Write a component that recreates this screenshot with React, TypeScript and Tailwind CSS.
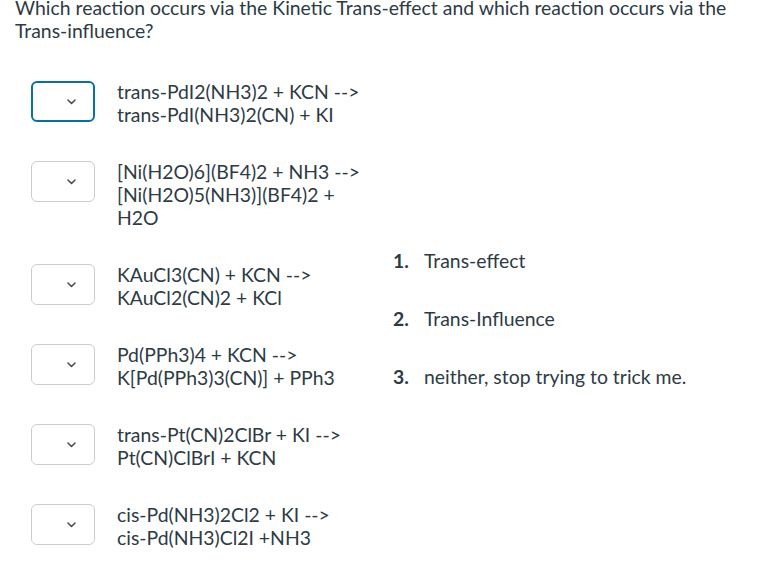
const REACTIONS: string[][] = [
  ['trans-PdI2(NH3)2 + KCN -->', 'trans-PdI(NH3)2(CN) + KI'],
  ['[Ni(H2O)6](BF4)2 + NH3 -->', '[Ni(H2O)5(NH3)](BF4)2 +', 'H2O'],
  ['KAuCl3(CN) + KCN -->', 'KAuCl2(CN)2 + KCl'],
  ['Pd(PPh3)4 + KCN -->', 'K[Pd(PPh3)3(CN)] + PPh3'],
  ['trans-Pt(CN)2ClBr + KI -->', 'Pt(CN)ClBrI + KCN'],
  ['cis-Pd(NH3)2Cl2 + KI -->', 'cis-Pd(NH3)Cl2I +NH3'],
];

const ANSWERS = ['Trans-effect', 'Trans-Influence', 'neither, stop trying to trick me.'];

function SelectBox({ focused }: { focused?: boolean }) {
  return (
    <div
      className={
        focused
          ? 'flex h-[41px] w-[64px] shrink-0 items-center justify-end rounded-[6px] border-2 border-[#0770a3] bg-white pr-[17px]'
          : 'flex h-[41px] w-[64px] shrink-0 items-center justify-end rounded-[6px] border border-[#c7cdd1] bg-white pr-[18px]'
      }
    >
      <svg width="9" height="6" viewBox="0 0 9 6" fill="none">
        <path d="M1 1l3.5 3.5L8 1" stroke="#4a4f54" strokeWidth="1.6" strokeLinecap="round" strokeLinejoin="round" />
      </svg>
    </div>
  );
}

export default function App() {
  return (
    <div className="h-[561px] w-[762px] overflow-hidden bg-white text-[19.4px] leading-[23px] text-[#2d3b45] font-['Lato',sans-serif]">
      {/* Question */}
      <p className="-mt-[4px] px-[15px]">
        Which reaction occurs via the Kinetic Trans-effect and which reaction occurs via the Trans-influence?
      </p>

      <div className="mt-[39px] flex">
        {/* Matching rows */}
        <div className="flex w-[393px] shrink-0 flex-col gap-[35px] pl-[31px]">
          {REACTIONS.map((lines, i) => (
            <div key={i} className="flex items-start">
              <SelectBox focused={i === 0} />
              <div className="ml-[22px] -mt-[1px] whitespace-nowrap">
                {lines.map((l, j) => (
                  <div key={j}>{l}</div>
                ))}
              </div>
            </div>
          ))}
        </div>

        {/* Answer options */}
        <ol className="mt-[168px] flex flex-col gap-[35px]">
          {ANSWERS.map((a, i) => (
            <li key={i} className="flex">
              <span className="w-[31px] shrink-0 font-bold">{i + 1}.</span>
              <span>{a}</span>
            </li>
          ))}
        </ol>
      </div>
    </div>
  );
}
